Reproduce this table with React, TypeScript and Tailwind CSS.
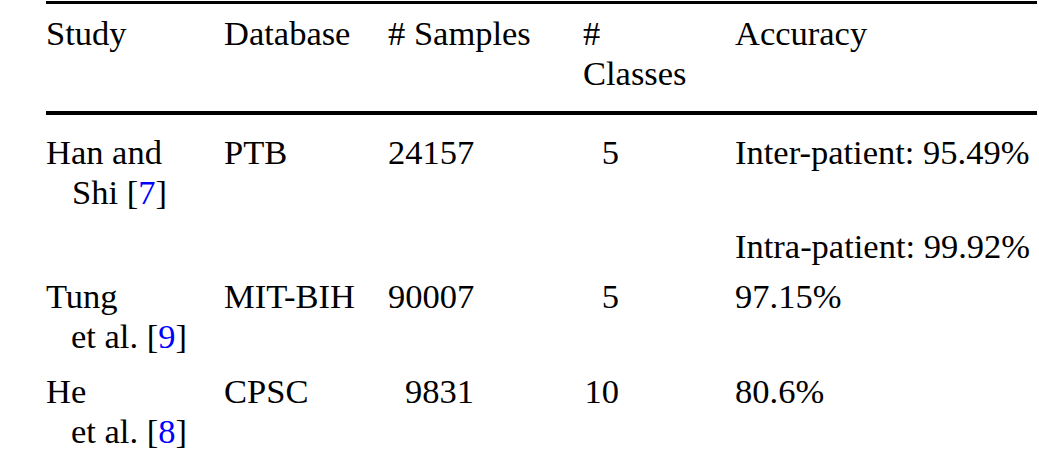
import React from "react";

const cols = "grid grid-cols-[178px_164px_195px_152px_302px]";

function Cite({ n }: { n: string }) {
  return (
    <>
      [<span className="text-[#0000ff]">{n}</span>]
    </>
  );
}

export default function App() {
  return (
    <div className="min-h-[463px] w-[1039px] bg-white pl-[46px] pt-[1px] font-['Liberation_Serif',serif] text-[34.5px] leading-[40px] text-black">
      <div className="w-[991px]">
        <div className="h-[3px] bg-black" />
        <div className={`${cols} pt-[9px] pb-[18px]`}>
          <div>Study</div>
          <div>Database</div>
          <div># Samples</div>
          <div>
            <div>#</div>
            <div>Classes</div>
          </div>
          <div>Accuracy</div>
        </div>
        <div className="h-[4px] bg-black" />

        <div className={`${cols} pt-[17px]`}>
          <div>
            <div>Han and</div>
            <div className="pl-[26px]">
              Shi <Cite n="7" />
            </div>
          </div>
          <div>PTB</div>
          <div>
            <div className="w-[86px] text-right">24157</div>
          </div>
          <div>
            <div className="w-[36px] text-right">5</div>
          </div>
          <div>Inter-patient: 95.49%</div>
        </div>

        <div className={`${cols} pt-[14px]`}>
          <div />
          <div />
          <div />
          <div />
          <div>Intra-patient: 99.92%</div>
        </div>

        <div className={`${cols} pt-[10px]`}>
          <div>
            <div>Tung</div>
            <div className="pl-[25px]">
              et al. <Cite n="9" />
            </div>
          </div>
          <div>MIT-BIH</div>
          <div>
            <div className="w-[86px] text-right">90007</div>
          </div>
          <div>
            <div className="w-[36px] text-right">5</div>
          </div>
          <div>97.15%</div>
        </div>

        <div className={`${cols} pt-[15px]`}>
          <div>
            <div>He</div>
            <div className="pl-[25px]">
              et al. <Cite n="8" />
            </div>
          </div>
          <div>CPSC</div>
          <div>
            <div className="w-[86px] text-right">9831</div>
          </div>
          <div>
            <div className="w-[36px] text-right">10</div>
          </div>
          <div>80.6%</div>
        </div>
      </div>
    </div>
  );
}
